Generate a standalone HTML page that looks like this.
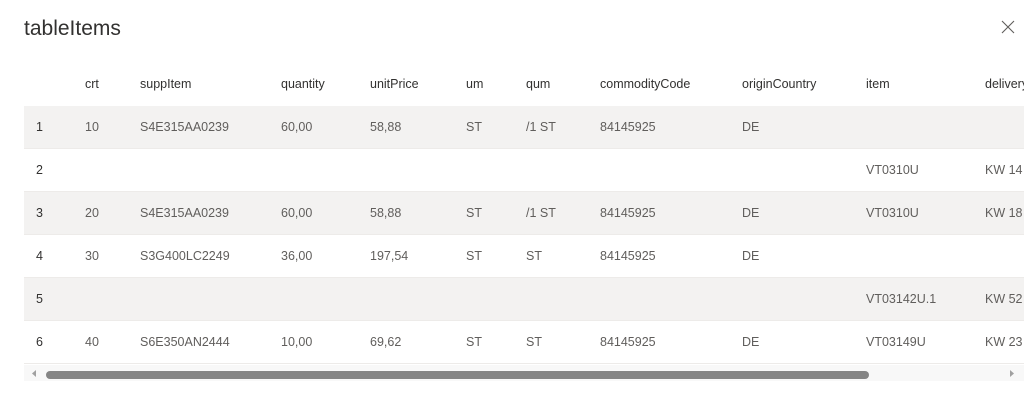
<!DOCTYPE html>
<html><head><style>
body{margin:0;width:1036px;height:411px;background:#fff;font-family:"Liberation Sans",sans-serif;overflow:hidden;position:relative}
.t{position:absolute;left:24px;top:17px;font-size:21px;color:#323130}
.x{position:absolute;left:1001px;top:20px}
.wrap{position:absolute;left:24px;top:62px;width:1000px;height:320px;overflow:hidden}
.row{position:absolute;left:0;width:1000px;height:43px;font-size:12.5px;color:#605e5c;border-bottom:1px solid #edebe9;box-sizing:border-box}
.row span{position:absolute;top:50%;transform:translateY(-50%);white-space:nowrap}
.g{background:#f3f2f1}
.h{color:#323130}
.i{color:#323130}
.sb{position:absolute;left:24px;top:365px;width:1000px;height:16px;background:#f8f8f8}
.th{position:absolute;left:22px;top:6px;width:823px;height:8px;border-radius:4px;background:#858585}
</style></head><body>
<div class="t">tableItems</div>
<svg class="x" width="14" height="14" viewBox="0 0 14 14"><path d="M1 1L13 13M13 1L1 13" stroke="#605e5c" stroke-width="1.1"/></svg>
<div class="wrap">
<div class="row h" style="top:0;border:none"><span style="left:61px">crt</span><span style="left:116px">suppItem</span><span style="left:257px">quantity</span><span style="left:346px">unitPrice</span><span style="left:442px">um</span><span style="left:502px">qum</span><span style="left:576px">commodityCode</span><span style="left:718px">originCountry</span><span style="left:842px">item</span><span style="left:961px">delivery</span></div>
<div class="row g" style="top:44px"><span class="i" style="left:12px">1</span><span style="left:61px">10</span><span style="left:116px">S4E315AA0239</span><span style="left:257px">60,00</span><span style="left:346px">58,88</span><span style="left:442px">ST</span><span style="left:502px">/1 ST</span><span style="left:576px">84145925</span><span style="left:718px">DE</span></div>
<div class="row" style="top:87px"><span class="i" style="left:12px">2</span><span style="left:842px">VT0310U</span><span style="left:961px">KW 14</span></div>
<div class="row g" style="top:130px"><span class="i" style="left:12px">3</span><span style="left:61px">20</span><span style="left:116px">S4E315AA0239</span><span style="left:257px">60,00</span><span style="left:346px">58,88</span><span style="left:442px">ST</span><span style="left:502px">/1 ST</span><span style="left:576px">84145925</span><span style="left:718px">DE</span><span style="left:842px">VT0310U</span><span style="left:961px">KW 18</span></div>
<div class="row" style="top:173px"><span class="i" style="left:12px">4</span><span style="left:61px">30</span><span style="left:116px">S3G400LC2249</span><span style="left:257px">36,00</span><span style="left:346px">197,54</span><span style="left:442px">ST</span><span style="left:502px">ST</span><span style="left:576px">84145925</span><span style="left:718px">DE</span></div>
<div class="row g" style="top:216px"><span class="i" style="left:12px">5</span><span style="left:842px">VT03142U.1</span><span style="left:961px">KW 52</span></div>
<div class="row" style="top:259px"><span class="i" style="left:12px">6</span><span style="left:61px">40</span><span style="left:116px">S6E350AN2444</span><span style="left:257px">10,00</span><span style="left:346px">69,62</span><span style="left:442px">ST</span><span style="left:502px">ST</span><span style="left:576px">84145925</span><span style="left:718px">DE</span><span style="left:842px">VT03149U</span><span style="left:961px">KW 23</span></div>
</div>
<div class="sb"><svg style="position:absolute;left:8px;top:5px" width="5" height="7"><path d="M4 0L0 3.5L4 7Z" fill="#a0a0a0"/></svg><div class="th"></div><svg style="position:absolute;left:986px;top:5px" width="5" height="7"><path d="M0 0L4 3.5L0 7Z" fill="#a0a0a0"/></svg></div>
</body></html>
